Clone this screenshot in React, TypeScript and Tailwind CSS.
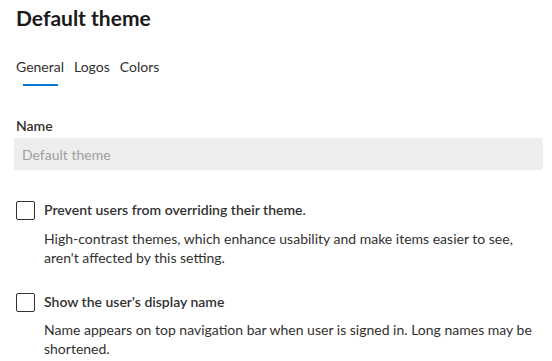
export default function App() {
  return (
    <div className="w-[552px] h-[361px] bg-white text-[#323130] overflow-hidden" style={{ fontFamily: '"Lato", "Noto Sans", sans-serif' }}>
      <div className="pl-4 pr-[9px]">
        <h1 className="text-[21px] font-bold leading-[28px] pt-[4px] text-[#1b1a19]">Default theme</h1>
        <div className="flex gap-[10px] mt-[25px] text-[14px] leading-[20px]">
          <div className="flex flex-col items-center">
            <span className="text-[#323130]">General</span>
            <div className="mt-[7px] h-[2px] w-[35px] bg-[#0078d4] ml-[1px]" />
          </div>
          <span>Logos</span>
          <span>Colors</span>
        </div>
        <div className="mt-[30px] text-[14px] font-semibold leading-[20px]">Name</div>
        <div className="mt-[2px] h-[32px] bg-[#ededed] rounded-[2px] flex items-center px-[8px] text-[14px] text-[#a19f9d] -ml-[2px]">Default theme</div>
        <div className="mt-[30px] flex gap-[9px]">
          <div className="w-[19px] h-[19px] mt-[1px] border border-[#323130] rounded-[2px] shrink-0" />
          <div className="text-[14px] leading-[19px]">
            <div className="font-semibold">Prevent users from overriding their theme.</div>
            <div className="mt-[10px]">High-contrast themes, which enhance usability and make items easier to see, aren't affected by this setting.</div>
          </div>
        </div>
        <div className="mt-[25px] flex gap-[9px]">
          <div className="w-[19px] h-[19px] mt-[1px] border border-[#323130] rounded-[2px] shrink-0" />
          <div className="text-[14px] leading-[19px]">
            <div className="font-semibold">Show the user's display name</div>
            <div className="mt-[9px]">Name appears on top navigation bar when user is signed in. Long names may be shortened.</div>
          </div>
        </div>
      </div>
    </div>
  );
}
